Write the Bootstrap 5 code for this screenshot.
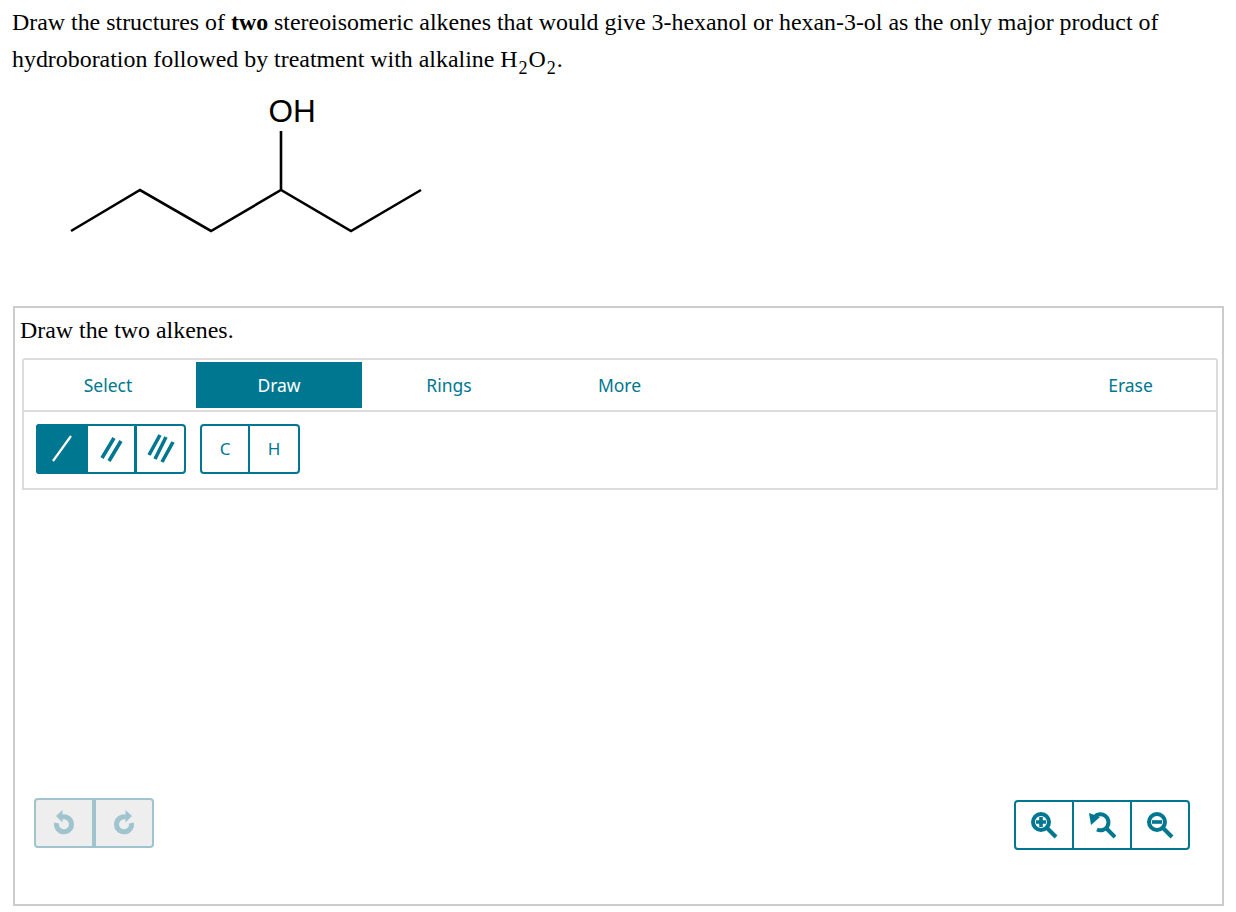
<!DOCTYPE html>
<html lang="en">
<head>
  <meta charset="UTF-8">
  <meta name="viewport" content="width=device-width, initial-scale=1.0">
  <title>Draw the two alkenes</title>
  <link href="https://cdn.jsdelivr.net/npm/bootstrap@5.3.0/dist/css/bootstrap.min.css" rel="stylesheet">
  <style>
    html, body { height: 912px; overflow: hidden; }
    body { background: #fff; color: #000; font-family: "Liberation Serif", serif; font-size: 23.9px; }
    .question { padding: 4px 12px 0 12px; line-height: 36.5px; height: 78px; white-space: nowrap; }
    .question sub { font-size: 18px; bottom: -7px; position: relative; vertical-align: baseline; padding: 0 1px; }
    .molecule { display: block; margin-left: 60px; }
    .molecule text { font-family: "Liberation Sans", sans-serif; font-size: 31.5px; }
    .answer-box { margin: 0 12px 0 13px; height: 600px; border: 2px solid #ccc; padding: 7px 4px 0 7px; position: relative; }
    .answer-label { height: 43px; line-height: 30px; margin-left: -2px; }
    .editor-tabs { font-family: "Noto Sans", sans-serif; font-size: 17.5px; color: #007790; border: 2px solid #dcdcdc; border-radius: 3px 3px 0 0; height: 54px; padding: 2px 0; }
    .tab-item { width: 171px; height: 46px; line-height: 46px; text-align: center; }
    .tab-select { width: 172px; padding-right: 4px; }
    .tab-draw { width: 166px; background: #007790; color: #fff; }
    .tab-rings { width: 174px; }
    .tab-more { width: 167px; }
    .tab-erase { margin-left: auto; }
    .editor-tools { border: 2px solid #dcdcdc; border-top: 0; height: 78px; padding: 12px 12px 0 12px; gap: 14px; }
    .tool-group { display: flex; height: 50px; border: 2px solid #007790; border-radius: 4px; color: #007790; font-family: "Noto Sans", sans-serif; font-size: 17px; }
    .tool-btn { display: flex; align-items: center; justify-content: center; width: 50px; }
    .tool-btn:first-child { width: 46px; }
    .tool-btn + .tool-btn { border-left: 2px solid #007790; }
    .tool-btn.tool-on { background: #007790; width: 52px; margin: -2px 0 -2px -2px; border-radius: 3px 0 0 3px; }
    .tool-on + .tool-btn { border-left: 0; width: 46px; }
    .tool-triple { border-left-width: 3px !important; width: 50px; }
    .tool-group-off { border-color: #a0c4ce; background: #eee; }
    .tool-group-off .tool-btn { width: 56px; }
    .tool-group-off .tool-btn + .tool-btn { width: 60px; border-left: 4px solid #a0c4ce; }
    .zoom-group .tool-btn { width: 58px; }
    .zoom-group .tool-btn:first-child { width: 56px; }
    .history-row { position: absolute; left: 19px; right: 32px; top: 490px; }
    .zoom-group { margin-top: 2px; }
  </style>
</head>
<body>
<div class="question">
  Draw the structures of <b>two</b> stereoisomeric alkenes that would give 3-hexanol or hexan-3-ol as the only major product of<br>
  hydroboration followed by treatment with alkaline H<sub>2</sub>O<sub>2</sub>.
</div>

<svg class="molecule" width="380" height="228" viewBox="60 78 380 228">
  <text x="268.5" y="122">OH</text>
  <path d="M71 231 L140 190 L211 231 L281 190 L351 231 L421 190 M281 190 L281 131" fill="none" stroke="#000" stroke-width="2.6"/>
</svg>

<div class="answer-box">
  <div class="answer-label">Draw the two alkenes.</div>
  <div class="editor-tabs d-flex">
    <div class="tab-item tab-select">Select</div>
    <div class="tab-item tab-draw">Draw</div>
    <div class="tab-item tab-rings">Rings</div>
    <div class="tab-item tab-more">More</div>
    <div class="tab-item tab-erase">Erase</div>
  </div>
  <div class="editor-tools d-flex">
    <div class="tool-group">
      <div class="tool-btn tool-on">
        <svg width="24" height="30" viewBox="0 0 24 30"><path d="M3 27 L21 2" stroke="#fff" stroke-width="2.2"/></svg>
      </div>
      <div class="tool-btn">
        <svg width="24" height="30" viewBox="0 0 24 30"><path d="M3 24 L15 4 M10 27 L22 7" stroke="#007790" stroke-width="3.6"/></svg>
      </div>
      <div class="tool-btn tool-triple">
        <svg width="28" height="30" viewBox="0 0 28 30"><path d="M2 21 L13 1 M8 25 L19 3 M15 28 L26 8" stroke="#007790" stroke-width="3.6"/></svg>
      </div>
    </div>
    <div class="tool-group">
      <div class="tool-btn">C</div>
      <div class="tool-btn">H</div>
    </div>
  </div>
  <div class="history-row d-flex justify-content-between align-items-start">
    <div class="tool-group tool-group-off">
      <div class="tool-btn">
        <svg width="24" height="26" viewBox="0 0 24 26"><path d="M10 7.1 A7.5 7.5 0 1 1 4.6 13" fill="none" stroke="#a0c4ce" stroke-width="5"/><path d="M10.5 0 V12.5 L4 6 Z" fill="#a0c4ce"/></svg>
      </div>
      <div class="tool-btn">
        <svg width="24" height="26" viewBox="0 0 24 26"><path d="M14 7.1 A7.5 7.5 0 1 0 19.4 13" fill="none" stroke="#a0c4ce" stroke-width="5"/><path d="M13.5 0 V12.5 L20 6 Z" fill="#a0c4ce"/></svg>
      </div>
    </div>
    <div class="tool-group zoom-group">
      <div class="tool-btn">
        <svg width="28" height="28" viewBox="0 0 28 28"><circle cx="11" cy="11" r="8" fill="none" stroke="#007790" stroke-width="4"/><path d="M17 17 L26 26" stroke="#007790" stroke-width="4"/><path d="M6 11 H16 M11 6 V16" stroke="#007790" stroke-width="3.6"/></svg>
      </div>
      <div class="tool-btn">
        <svg width="28" height="28" viewBox="0 0 28 28"><path d="M6.5 6 A8 8 0 1 1 9 18.5" fill="none" stroke="#007790" stroke-width="4"/><path d="M18 17 L27 26" stroke="#007790" stroke-width="4"/><path d="M1 2 L12 6 L3 14 Z" fill="#007790"/></svg>
      </div>
      <div class="tool-btn">
        <svg width="28" height="28" viewBox="0 0 28 28"><circle cx="11" cy="11" r="8" fill="none" stroke="#007790" stroke-width="4"/><path d="M17 17 L26 26" stroke="#007790" stroke-width="4"/><path d="M6 11 H16" stroke="#007790" stroke-width="3.6"/></svg>
      </div>
    </div>
  </div>
</div>

<script src="https://cdn.jsdelivr.net/npm/bootstrap@5.3.0/dist/js/bootstrap.bundle.min.js"></script>
</body>
</html>
